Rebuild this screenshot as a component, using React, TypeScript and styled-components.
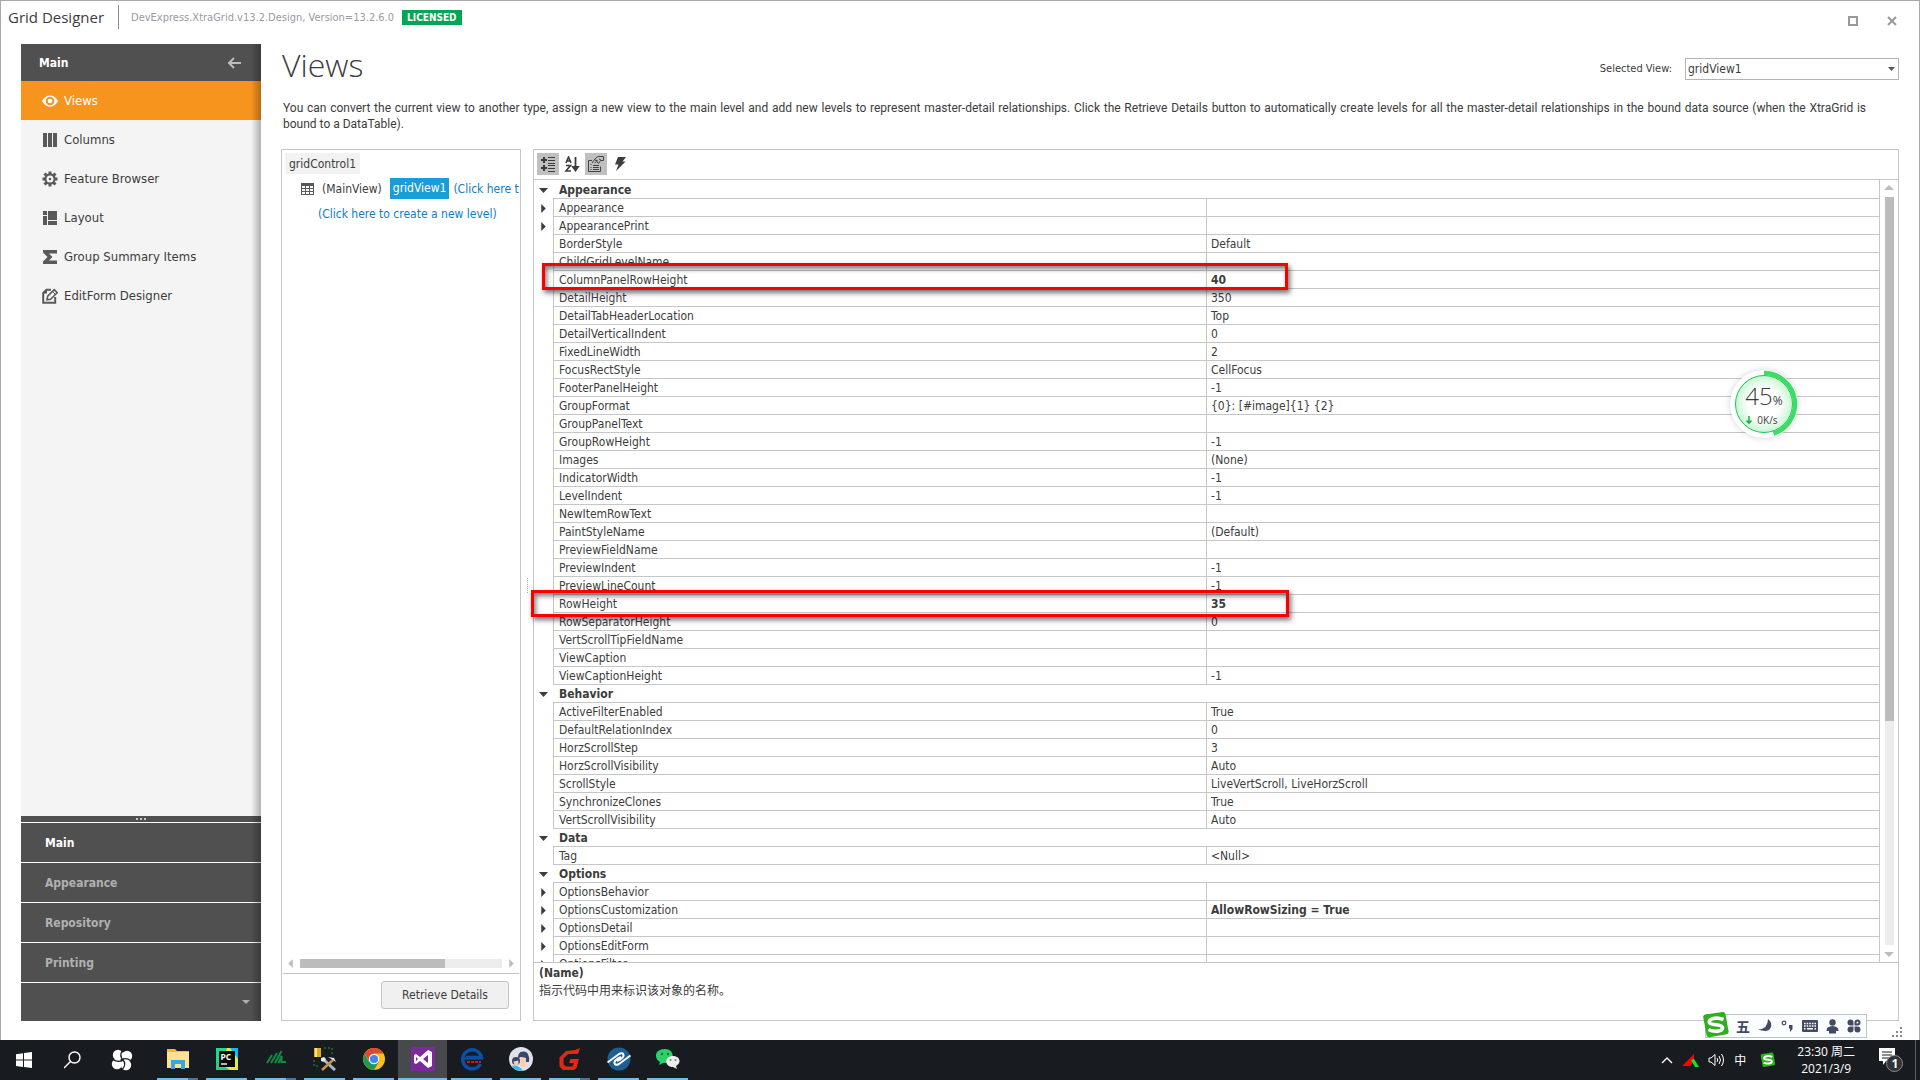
import React from 'react';
import styled, { createGlobalStyle, css } from 'styled-components';

const ui = `'DejaVu Sans Condensed', 'Noto Sans CJK SC', sans-serif`;
const display = `'Open Sans', 'Noto Sans CJK SC', sans-serif`;
const line = '#c6c6c6';
const ink = '#3c3c3c';
const dark = '#505050';

const Global = createGlobalStyle`
  * { box-sizing: border-box; }
  body { margin: 0; background: #fff; color: ${ink}; font: 12px/18px ${ui}; }
  button, select, input { font: inherit; color: inherit; }
  button { border: 0; padding: 0; background: none; text-align: left; }
  svg { display: block; flex: none; }
`;

/* ---------- shell ---------- */
const Screen = styled.div`
  position: relative;
  display: flex;
  flex-direction: column;
  height: 100vh;
  overflow: hidden;
`;
const Window = styled.main`
  flex: 1;
  min-height: 0;
  display: flex;
  flex-direction: column;
  border: 1px solid #a9a9a9;
  border-bottom: 0;
`;
const TitleBar = styled.header`
  display: flex;
  align-items: center;
  height: 43px;
  padding: 0 22px 12px 7px;
`;
const AppTitle = styled.h1`
  margin: 0;
  padding-right: 14px;
  font: 400 15px/24px ${display};
  border-right: 1px solid #8c8c8c;
`;
const Version = styled.span`
  padding-left: 12px;
  padding-top: 2px;
  font-size: 11px;
  color: #9a9aa2;
`;
const Badge = styled.span`
  margin-top: 2px;
  margin-left: 8px;
  padding: 0 5px;
  background: #00a651;
  color: #fff;
  font: 700 10px/15px ${ui};
`;
const WindowButtons = styled.div`
  display: flex;
  gap: 29px;
  margin-left: auto;
  padding-top: 8px;
  color: #999;
  button { display: block; }
`;
const Body = styled.div`
  flex: 1;
  min-height: 0;
  display: flex;
  gap: 20px;
  padding: 0 20px 19px 20px;
`;

/* ---------- sidebar ---------- */
const Sidebar = styled.nav`
  position: relative;
  flex: none;
  width: 240px;
  display: flex;
  flex-direction: column;
  background: #f4f4f4;
  &::after {
    content: '';
    position: absolute;
    inset: 0 0 0 auto;
    width: 10px;
    background: linear-gradient(to right, transparent, rgba(0, 0, 0, 0.28));
    pointer-events: none;
  }
`;
const SideHead = styled.div`
  display: flex;
  align-items: center;
  justify-content: space-between;
  height: 37px;
  padding: 0 20px 0 18px;
  background: ${dark};
  color: #fff;
  font-weight: 700;
`;
const SideItem = styled.button<{ $on?: boolean }>`
  display: flex;
  align-items: center;
  gap: 6px;
  height: 39px;
  padding-left: 21px;
  font-size: 13px;
  color: ${p => (p.$on ? '#fff' : ink)};
  background: ${p => (p.$on ? '#f7941e' : 'transparent')};
  svg { color: ${p => (p.$on ? '#fff' : '#5a5a5a')}; }
`;
const Spacer = styled.div`flex: 1;`;
const Grip = styled.div`
  display: flex;
  justify-content: center;
  align-items: center;
  gap: 2px;
  height: 6px;
  background: ${dark};
  i { width: 2px; height: 2px; background: #c8c8c8; }
`;
const Group = styled.button<{ $on?: boolean }>`
  height: 40px;
  padding-left: 24px;
  border-top: 1px solid #fff;
  background: ${dark};
  color: ${p => (p.$on ? '#fff' : '#b0b0b0')};
  font-weight: 700;
`;
const GroupMore = styled(Group)`
  height: 39px;
  display: flex;
  align-items: center;
  justify-content: flex-end;
  padding-right: 11px;
`;

/* ---------- content ---------- */
const Content = styled.section`
  flex: 1;
  min-width: 0;
  display: flex;
  flex-direction: column;
`;
const PageHead = styled.div`
  display: flex;
  justify-content: space-between;
  align-items: flex-start;
  height: 56px;
`;
const PageTitle = styled.h2`
  margin: 0;
  padding-left: 1px;
  font: 300 32px/42px ${display};
`;
const ViewPicker = styled.label`
  display: flex;
  align-items: center;
  gap: 13px;
  padding-top: 14px;
  font-size: 11px;
`;
const SelectBox = styled.span`
  position: relative;
  display: block;
  select {
    display: block;
    appearance: none;
    width: 214px;
    height: 22px;
    padding: 0 2px;
    border: 1px solid #b4b4b4;
    border-radius: 0;
    background: #fff;
    font-size: 12px;
  }
  svg { position: absolute; right: 4px; top: 9px; color: #555; }
`;
const Intro = styled.p`
  margin: 0;
  height: 49px;
  padding: 0 33px 0 2px;
  font-family: Roboto, sans-serif;
  line-height: 16px;
  text-align: justify;
`;
const Panels = styled.div`
  flex: 1;
  min-height: 0;
  display: flex;
`;
const Panel = styled.div`
  display: flex;
  flex-direction: column;
  min-width: 0;
  border: 1px solid ${line};
`;
const TreePanel = styled(Panel)`width: 240px; flex: none;`;
const GridPanel = styled(Panel)`flex: 1;`;
const Splitter = styled.div`
  flex: none;
  width: 12px;
  display: flex;
  align-items: center;
  justify-content: center;
  i { height: 15px; border-left: 1px dotted #aaa; }
`;
const Tree = styled.div`
  flex: 1;
  display: flex;
  flex-direction: column;
  align-items: stretch;
  gap: 4px;
  margin-right: 1px;
  padding: 3px 0 0 3px;
  overflow: hidden;
  white-space: nowrap;
`;
const TreeRoot = styled.span`
  align-self: flex-start;
  padding: 1px 4px 0;
  background: #f2f2f2;
  line-height: 20px;
`;
const TreeRow = styled.div<{ $indent: number }>`
  display: flex;
  align-items: center;
  height: 21px;
  padding-left: ${p => p.$indent}px;
`;
const TreeName = styled.span`padding: 0 8px;`;
const Selected = styled.span`
  padding: 0 3px;
  margin-right: 4px;
  background: #1a9cd8;
  color: #fff;
  line-height: 21px;
`;
const TreeLink = styled.a`
  flex: 1;
  min-width: 0;
  overflow: hidden;
  color: #0e7dc2;
  text-decoration: none;
`;
const HScroll = styled.div`
  display: flex;
  align-items: center;
  gap: 7px;
  height: 20px;
  padding: 0 6px;
  color: #bdbdbd;
`;
const HTrack = styled.div`
  flex: 1;
  height: 9px;
  background: #ededed;
  i { display: block; width: 72%; height: 100%; background: #bcbcbc; }
`;
const TreeFoot = styled.div`
  display: flex;
  justify-content: flex-end;
  margin: 0 1px;
  padding: 7px 10px 11px;
  border-top: 1px solid ${line};
`;
const PushButton = styled.button`
  width: 128px;
  height: 28px;
  border: 1px solid #c4c4c4;
  border-radius: 3px;
  background: #f0f0f0;
  text-align: center;
`;

/* ---------- property grid ---------- */
const Tools = styled.div`
  display: flex;
  align-items: center;
  gap: 2px;
  height: 30px;
  padding: 0 3px 2px;
  border-bottom: 1px solid ${line};
`;
const Tool = styled.button<{ $on?: boolean }>`
  display: grid;
  place-items: center;
  width: 22px;
  height: 22px;
  background: ${p => (p.$on ? '#c0c0c0' : 'transparent')};
`;
const GridArea = styled.div`
  flex: 1;
  min-height: 0;
  display: flex;
  border-bottom: 1px solid ${line};
`;
const TableClip = styled.div`
  flex: 1;
  min-width: 0;
  padding-top: 1px;
  overflow: hidden;
`;
const Table = styled.table`
  width: 100%;
  table-layout: fixed;
  border-collapse: separate;
  border-spacing: 0;
  td, th {
    height: 18px;
    padding: 1px 0 0;
    line-height: 16px;
    text-align: left;
    font-weight: 400;
    white-space: nowrap;
  }
  col:nth-child(1) { width: 19px; }
  col:nth-child(2) { width: 653px; }
`;
const Toggle = styled.td`
  svg { margin: 0 auto; }
`;
const rule = css`border-bottom: 1px solid ${line};`;
const Category = styled.th`
  && { font-weight: 700; padding-left: 6px; }
  ${rule}
`;
const Name = styled.th`
  && { padding-left: 5px; }
  border-left: 1px solid ${line};
  ${rule}
`;
const Value = styled.td<{ $bold?: boolean }>`
  && { padding-left: 4px; font-weight: ${p => (p.$bold ? 700 : 400)}; }
  border-left: 1px solid ${line};
  ${rule}
`;
const VScroll = styled.div`
  flex: none;
  width: 19px;
  display: flex;
  flex-direction: column;
  align-items: center;
  gap: 7px;
  padding: 5px 0;
  border-left: 1px solid ${line};
  color: #bdbdbd;
`;
const VTrack = styled.div`
  flex: 1;
  width: 9px;
  background: #ededed;
  i { display: block; width: 100%; height: 70%; background: #bcbcbc; }
`;
const Help = styled.div`
  height: 57px;
  padding: 1px 5px;
  strong { display: block; font-size: 12px; }
`;

/* ---------- overlays ---------- */
const Mark = styled.div<{ $x: number; $y: number; $w: number }>`
  position: absolute;
  left: ${p => p.$x}px;
  top: ${p => p.$y}px;
  width: ${p => p.$w}px;
  height: 27px;
  border: 3px solid #f80000;
  box-shadow: 2px 3px 5px rgba(0, 0, 0, 0.55), inset 2px 3px 5px rgba(0, 0, 0, 0.5);
  pointer-events: none;
`;
const Meter = styled.div`
  position: absolute;
  right: 122px;
  top: 370px;
  width: 68px;
  height: 68px;
  border-radius: 50%;
  display: flex;
  flex-direction: column;
  align-items: center;
  padding-top: 14px;
  background: #fff;
  box-shadow: 0 0 6px rgba(0, 0, 0, 0.18);
  > svg { position: absolute; inset: 0; }
`;
const Percent = styled.div`
  position: relative;
  font: 300 24px/24px ${display};
  small { font-size: 12px; font-weight: 400; }
`;
const Speed = styled.div`
  position: relative;
  display: flex;
  align-items: center;
  gap: 5px;
  padding-right: 4px;
  font: 10px/14px ${display};
`;
const Ime = styled.div`
  position: absolute;
  right: 53px;
  bottom: 42px;
  display: flex;
  align-items: center;
  gap: 8px;
  height: 24px;
  padding-right: 5px;
  border: 1px solid #b4c6d4;
  background: #fbfdff;
  color: #434b63;
  font: 700 14px/20px 'Noto Sans CJK SC', sans-serif;
  > svg:first-child { margin: -4px -2px -2px -4px; }
`;
const ResizeGrip = styled.div`
  position: absolute;
  right: 17px;
  bottom: 42px;
`;

/* ---------- taskbar ---------- */
const Taskbar = styled.footer`
  flex: none;
  display: flex;
  height: 40px;
  background: #181c21;
  color: #fff;
`;
const Starters = styled.div`
  display: flex;
  gap: 1px;
  width: 153px;
  button { width: 48px; display: grid; place-items: center; }
`;
const Task = styled.button<{ $active?: boolean; $many?: boolean }>`
  display: grid;
  grid-template-rows: 38px 2px;
  place-items: center;
  width: 49px;
  background: ${p => (p.$active ? '#47494d' : 'transparent')};
  &::after {
    content: '';
    width: ${p => (p.$active ? 49 : 41)}px;
    height: 2px;
    background: ${p => (p.$many ? 'linear-gradient(to right, #76b9ed 31px, #4a7598 31px)' : '#76b9ed')};
  }
`;
const Tray = styled.div`
  display: flex;
  align-items: center;
  margin-left: auto;
  font: 12px/17px ${display};
`;
const TrayIcons = styled.div`
  display: flex;
  align-items: center;
  gap: 9px;
  padding-right: 21px;
  > svg:last-child { margin-left: 5px; }
`;
const Clock = styled.div`
  text-align: center;
  padding-right: 23px;
`;
const Notice = styled.div`
  padding-right: 11px;
  height: 40px;
  display: flex;
  align-items: center;
`;
const ShowDesktop = styled.div`
  width: 5px;
  height: 40px;
  border-left: 1px solid #5c5f63;
`;

/* ---------- icons ---------- */
const Down = ({ w = 8, h = 4 }) => <svg width={w} height={h} viewBox="0 0 8 4" preserveAspectRatio="none"><path d="M0 0h8L4 4z" fill="currentColor" /></svg>;
const Up = () => <svg width="10" height="5" viewBox="0 0 8 4"><path d="M0 4h8L4 0z" fill="currentColor" /></svg>;
const Right = () => <svg width="5" height="9" viewBox="0 0 4 8"><path d="M0 0v8l4-4z" fill="currentColor" /></svg>;
const Left = () => <svg width="5" height="9" viewBox="0 0 4 8"><path d="M4 0v8L0 4z" fill="currentColor" /></svg>;

const sideIcons: Record<string, React.ReactNode> = {
  Views: <><path d="M0 8C3.500 .5 12.500 .5 16 8C12.500 15.500 3.500 15.500 0 8z" fill="currentColor" /><circle cx="8" cy="8" r="3.300" fill="none" stroke="#f7941e" strokeWidth="2" /></>,
  Columns: <path d="M1 1h4v14H1zM6 1h4v14H6zM11 1h4v14h-4z" fill="currentColor" />,
  'Feature Browser': <><circle cx="8" cy="8" r="4.600" fill="none" stroke="currentColor" strokeWidth="2.200" /><path d="M8 .5v3M8 12.500v3M.5 8h3M12.500 8h3M2.500 2.500l2.300 2.300M11.200 11.200l2.300 2.300M2.500 13.500l2.300-2.300M11.200 4.800l2.300-2.300" stroke="currentColor" strokeWidth="3" /><circle cx="8" cy="8" r="1.300" fill="currentColor" /></>,
  Layout: <path d="M1 1h4v4H1zM1 6h4v9H1zM6 1h9v9H6zM6 11h9v4H6z" fill="currentColor" />,
  'Group Summary Items': <path d="M1 1h14v3.500H7L10.500 8 7 11.500h8V15H1v-2.500L5.500 8 1 3.500z" fill="currentColor" />,
  'EditForm Designer': <><path d="M9 1.800H4.500L1.200 5v9.800h12V9" fill="none" stroke="currentColor" strokeWidth="2" /><path d="M1 5.500L5 1v4.500z" fill="currentColor" /><path d="M5 11.800l.7-3.600L12.200 1.700l3 3-6.600 6.500z" fill="#f4f4f4" stroke="currentColor" strokeWidth="1.600" /><path d="M10.500 3.500l3 3" stroke="currentColor" /></>,
};
const SideIcon = ({ name }: { name: string }) => <svg width="16" height="16" viewBox="0 0 16 16">{sideIcons[name]}</svg>;

const Sogou = ({ size }: { size: number }) => (
  <svg width={size} height={size} viewBox="0 0 28 28">
    <path d="M3.500 3.500Q1 4 1.200 6L4.500 24Q5 26.600 7.500 26.300L24.500 23.200Q27 22.700 26.600 20.500L23.500 3.300Q23 .8 20.700 1z" fill="#2db01c" />
    <path d="M21.500 8.500C14 5.500 6 8 7.500 11.800C9 14.800 20 12.500 20.500 16.500C21 20.500 12 21.500 6.500 18.500" fill="none" stroke="#fff" strokeWidth="3.600" />
  </svg>
);

const Icon = ({ children, s = 24 }: { children: React.ReactNode; s?: number }) => <svg width={s} height={s} viewBox="0 0 24 24">{children}</svg>;

const tasks: { name: string; many?: boolean; active?: boolean; art: React.ReactNode }[] = [
  { name: 'File Explorer', many: true, art: <><path d="M1 2h8l2 2h12v17H1z" fill="#f0b93a" /><path d="M1 5h22v16H1z" fill="#ffe08f" /><path d="M5 22v-9h14v9h-4v-5H9v5z" fill="#3aa5e0" /></> },
  { name: 'PyCharm', art: <><path d="M1 1h14v22H1z" fill="#21d789" /><path d="M12 1h11v10z" fill="#07c3f2" /><path d="M12 1h7l4 10v12H5z" fill="#e5e942" /><path d="M15 1h8v11z" fill="#0fbde8" /><path d="M1 14v9h14z" fill="#2fc887" /><path d="M4 4h16v16H4z" fill="#0a0a0a" /><path d="M6 17h6" stroke="#fff" strokeWidth="1.400" /><text x="5.500" y="12.500" fill="#fff" fontSize="8.500" fontWeight="700" fontFamily="Open Sans">PC</text></> },
  { name: 'Network Monitor', many: true, art: <path d="M3 16L8 8M7 16L13 6M11 16L17.500 4M14.500 16L17.500 9V15H22" fill="none" stroke="#108c40" strokeWidth="2" /> },
  { name: 'Database Tools', art: <><path d="M1 1h7v9H1z" fill="#e9a91c" /><path d="M2 1h2v9H2z" fill="#ffe693" /><path d="M11 1h8v8M1 13v6h6" fill="none" stroke="#28952d" strokeDasharray="2 2" /><path d="M10 12l12 11" stroke="#a8b8cb" strokeWidth="3" /><path d="M20 13L9 23" stroke="#c79346" strokeWidth="2.500" /><path d="M8 11l3-1 2 2-2 3-3-1zM15 10l6 1 2 4-3-2z" fill="#e4eaf0" /></> },
  { name: 'Chrome', art: <><circle cx="12" cy="12" r="11" fill="#fbc116" /><path d="M2.500 6.500A11 11 0 0 1 21.500 6.500H12L7.500 14.500z" fill="#df4634" /><path d="M2.500 6.500A11 11 0 0 0 12 23l5-8.500-10 0z" fill="#1c9a55" /><circle cx="12" cy="12" r="5.200" fill="#fff" /><circle cx="12" cy="12" r="4.100" fill="#4285f4" /></> },
  { name: 'Visual Studio', active: true, art: <><path d="M0 0h24v24H0z" fill="#7b2a9b" /><path d="M17 3l4 2v14l-4 2-8-7-4 3-2-1V8l2-1 4 3zM17 8l-5 4 5 4zM5 10v4l2-2z" fill="#fff" fillRule="evenodd" /></> },
  { name: 'Browser', art: <><path d="M20.500 17A9.500 9.500 0 1 1 21.500 10.500H6" fill="none" stroke="#0b4fa8" strokeWidth="3.400" /><path d="M1 11.500h22" stroke="#0b4fa8" strokeWidth="2" /><path d="M7 15h14" stroke="#c01c26" strokeWidth="2" strokeDasharray="3 1" /></> },
  { name: 'Contacts', art: <><circle cx="12" cy="12" r="12" fill="#dfe3e7" /><path d="M9 13Q8 4 15 4.500Q21 5 20 15h-3v-4l-6-1z" fill="#37466b" /><path d="M11 10l6 1v4l-1 5h-4z" fill="#f9cfae" /><circle cx="7" cy="14" r="4" fill="#37466b" /><path d="M4.500 14.500l5-1v4l-4 1z" fill="#f9cfae" /><path d="M3 19q5-2 11 4.500-7 1.500-11-4.500z" fill="#35b8e6" /></> },
  { name: 'G Studio', many: true, art: <path d="M22 1l-2 6H10l-4.500 4.500v6L8 19.500h6.500l1.500-3.500h-5l1.500-4H21l-2.500 9-2.500 2H5l-3.500-3.500v-9L8 4l9-1z" fill="#e02a18" /> },
  { name: 'Sync', art: <><circle cx="12" cy="12" r="11.500" fill="#1c5e96" /><path d="M.5 15.500L12 7q4-2 4.500 1T10 14M23.500 8.500L12 17q-4 2-4.500-1T14 10" fill="none" stroke="#fff" strokeWidth="2" /></> },
  { name: 'WeChat', art: <><path d="M9 2c-11 0-11 10-5 13l-1 3 4-2c12 1 13-14 2-14z" fill="#2bd168" /><path d="M17 9c-9 0-9 11 0 11l4 2-1-3c6-3 4-10-3-10z" fill="#ececec" /><circle cx="6" cy="7" r="1.200" fill="#17713a" /><circle cx="12" cy="7" r="1.200" fill="#17713a" /><circle cx="14.500" cy="13" r="1" fill="#777" /><circle cx="19.500" cy="13" r="1" fill="#777" /></> },
];

/* ---------- data ---------- */
type Row = [name: string, value?: string, flag?: 'bold' | 'open' | 'category' | 'openbold'];
const rows: Row[] = [
  ['Appearance', '', 'category'],
  ['Appearance', '', 'open'],
  ['AppearancePrint', '', 'open'],
  ['BorderStyle', 'Default'],
  ['ChildGridLevelName'],
  ['ColumnPanelRowHeight', '40', 'bold'],
  ['DetailHeight', '350'],
  ['DetailTabHeaderLocation', 'Top'],
  ['DetailVerticalIndent', '0'],
  ['FixedLineWidth', '2'],
  ['FocusRectStyle', 'CellFocus'],
  ['FooterPanelHeight', '-1'],
  ['GroupFormat', '{0}: [#image]{1} {2}'],
  ['GroupPanelText'],
  ['GroupRowHeight', '-1'],
  ['Images', '(None)'],
  ['IndicatorWidth', '-1'],
  ['LevelIndent', '-1'],
  ['NewItemRowText'],
  ['PaintStyleName', '(Default)'],
  ['PreviewFieldName'],
  ['PreviewIndent', '-1'],
  ['PreviewLineCount', '-1'],
  ['RowHeight', '35', 'bold'],
  ['RowSeparatorHeight', '0'],
  ['VertScrollTipFieldName'],
  ['ViewCaption'],
  ['ViewCaptionHeight', '-1'],
  ['Behavior', '', 'category'],
  ['ActiveFilterEnabled', 'True'],
  ['DefaultRelationIndex', '0'],
  ['HorzScrollStep', '3'],
  ['HorzScrollVisibility', 'Auto'],
  ['ScrollStyle', 'LiveVertScroll, LiveHorzScroll'],
  ['SynchronizeClones', 'True'],
  ['VertScrollVisibility', 'Auto'],
  ['Data', '', 'category'],
  ['Tag', '<Null>'],
  ['Options', '', 'category'],
  ['OptionsBehavior', '', 'open'],
  ['OptionsCustomization', 'AllowRowSizing = True', 'openbold'],
  ['OptionsDetail', '', 'open'],
  ['OptionsEditForm', '', 'open'],
  ['OptionsFilter', '', 'open'],
];

const PropertyTable = () => (
  <Table>
    <colgroup><col /><col /><col /></colgroup>
    <tbody>
      {rows.map(([name, value, flag], i) =>
        flag === 'category' ? (
          <tr key={i}>
            <Toggle><Down w={9} h={5} /></Toggle>
            <Category colSpan={2} scope="rowgroup">{name}</Category>
          </tr>
        ) : (
          <tr key={i}>
            <Toggle>{flag?.startsWith('open') && <Right />}</Toggle>
            <Name scope="row">{name}</Name>
            <Value $bold={flag?.endsWith('bold')}>{value}</Value>
          </tr>
        ),
      )}
    </tbody>
  </Table>
);

export default function App() {
  return (
    <Screen>
      <Global />
      <Window>
        <TitleBar>
          <AppTitle>Grid Designer</AppTitle>
          <Version>DevExpress.XtraGrid.v13.2.Design, Version=13.2.6.0</Version>
          <Badge>LICENSED</Badge>
          <WindowButtons>
            <button aria-label="Maximize"><svg width="10" height="10" viewBox="0 0 10 10"><path d="M1 1h8v8H1z" fill="none" stroke="currentColor" strokeWidth="2" /></svg></button>
            <button aria-label="Close"><svg width="10" height="10" viewBox="0 0 10 10"><path d="M1 1l8 8M9 1L1 9" stroke="currentColor" strokeWidth="2" /></svg></button>
          </WindowButtons>
        </TitleBar>
        <Body>
          <Sidebar>
            <SideHead>
              Main
              <svg width="14" height="12" viewBox="0 0 14 12"><path d="M7 1L2 6l5 5M2 6h12" fill="none" stroke="#bdbdbd" strokeWidth="2" /></svg>
            </SideHead>
            {Object.keys(sideIcons).map(n => (
              <SideItem key={n} $on={n === 'Views'}><SideIcon name={n} />{n}</SideItem>
            ))}
            <Spacer />
            <Grip><i /><i /><i /></Grip>
            <Group $on>Main</Group>
            <Group>Appearance</Group>
            <Group>Repository</Group>
            <Group>Printing</Group>
            <GroupMore aria-label="More groups"><Down /></GroupMore>
          </Sidebar>
          <Content>
            <PageHead>
              <PageTitle>Views</PageTitle>
              <ViewPicker>
                Selected View:
                <SelectBox>
                  <select defaultValue="gridView1"><option>gridView1</option></select>
                  <Down w={7} />
                </SelectBox>
              </ViewPicker>
            </PageHead>
            <Intro>
              You can convert the current view to another type, assign a new view to the main level and add new levels to represent master-detail relationships. Click the Retrieve Details button to automatically create levels for all the master-detail relationships in the bound data source (when the XtraGrid is bound to a DataTable).
            </Intro>
            <Panels>
              <TreePanel>
                <Tree>
                  <TreeRoot>gridControl1</TreeRoot>
                  <TreeRow $indent={16}>
                    <svg width="13" height="12" viewBox="0 0 13 12"><path d="M0 0h13v12H0z" fill="#5a5a5a" /><path d="M1 3h3v2H1zM5 3h3v2H5zM9 3h3v2H9zM1 6h3v2H1zM5 6h3v2H5zM9 6h3v2H9zM1 9h3v2H1zM5 9h3v2H5zM9 9h3v2H9z" fill="#fff" /></svg>
                    <TreeName>(MainView)</TreeName>
                    <Selected>gridView1</Selected>
                    <TreeLink href="#view">(Click here to change view)</TreeLink>
                  </TreeRow>
                  <TreeRow $indent={33}>
                    <TreeLink href="#level">(Click here to create a new level)</TreeLink>
                  </TreeRow>
                </Tree>
                <HScroll><Left /><HTrack><i /></HTrack><Right /></HScroll>
                <TreeFoot><PushButton>Retrieve Details</PushButton></TreeFoot>
              </TreePanel>
              <Splitter><i /></Splitter>
              <GridPanel>
                <Tools>
                  <Tool $on aria-label="Categorized"><svg width="16" height="16" viewBox="0 0 16 16"><path d="M1 4h6M4 1v6M1 12h6M4 9v6" stroke={ink} strokeWidth="2" /><path d="M8 1.500h7M8 4.500h7M8 7.500h7M8 9.500h7M8 12.500h7M8 15.500h7" stroke={ink} /></svg></Tool>
                  <Tool aria-label="Alphabetical"><svg width="16" height="16" viewBox="0 0 16 16"><path d="M2 7L4.500 1 7 7M3 5h3M2 9.500h4.500L2 15h5" fill="none" stroke={ink} strokeWidth="1.600" /><path d="M11.500 1v12M9 11l2.500 3.500L14 11z" stroke={ink} strokeWidth="1.800" fill={ink} /></svg></Tool>
                  <Tool $on aria-label="Property pages"><svg width="18" height="18" viewBox="0 0 18 18" fill="none" stroke="#444"><path d="M5 5.500H1.500v11h12v-5M3.500 9.500h1M6 10.500h6M3.500 12.500h1M6 12.500h6M3.500 14.500h1M6 14.500h6" /><path d="M5 8l3-4 3-2.500h5.500v4h-3l-2 3-2-2-2 1.500M8 5l3 1M12 4l2 1" /></svg></Tool>
                  <Tool aria-label="Events"><svg width="14" height="16" viewBox="0 0 14 16"><path d="M5 1h8L9.500 5.500h3L3 15l2.500-6.500H2z" fill={ink} /></svg></Tool>
                </Tools>
                <GridArea>
                  <TableClip><PropertyTable /></TableClip>
                  <VScroll><Up /><VTrack><i /></VTrack><Down w={10} h={5} /></VScroll>
                </GridArea>
                <Help>
                  <strong>(Name)</strong>
                  指示代码中用来标识该对象的名称。
                </Help>
              </GridPanel>
            </Panels>
          </Content>
        </Body>
      </Window>

      <Taskbar>
        <Starters>
          <button aria-label="Start"><svg width="16" height="16" viewBox="0 0 16 16"><path d="M0 2.200L7 1.200V7.600H0zM8 1.100L16 0v7.600H8zM0 8.500h7v6.400L0 13.900zM8 8.500h8V16L8 14.900z" fill="#fff" /></svg></button>
          <button aria-label="Search"><svg width="18" height="18" viewBox="0 0 18 18"><circle cx="10.500" cy="6.500" r="5.500" fill="none" stroke="#fff" strokeWidth="1.400" /><path d="M6.500 10.500L0 17" stroke="#fff" strokeWidth="1.500" /></svg></button>
          <button aria-label="Task view"><svg width="22" height="22" viewBox="0 0 22 22"><circle cx="7" cy="6" r="5.200" fill="#fff" /><circle cx="16" cy="7" r="5.200" fill="#fff" /><circle cx="15" cy="16" r="5.200" fill="#fff" /><circle cx="6" cy="15" r="5.200" fill="#fff" /><path d="M11.500 1Q8 7 12 11T11 21M1.500 10.500Q8 14 11 11T20.500 12" fill="none" stroke="#181c21" strokeWidth="1.300" /></svg></button>
        </Starters>
        {tasks.map(t => (
          <Task key={t.name} aria-label={t.name} $active={t.active} $many={t.many}><Icon>{t.art}</Icon></Task>
        ))}
        <Tray>
          <TrayIcons>
            <svg width="12" height="8" viewBox="0 0 12 8"><path d="M1 7l5-5 5 5" fill="none" stroke="#fff" strokeWidth="1.400" /></svg>
            <svg width="17" height="13" viewBox="0 0 17 13"><path d="M12 0v7l-4 5H0z" fill="#f00" /><path d="M9 6l3-1 5 8h-4z" fill="#0e2" /></svg>
            <svg width="17" height="14" viewBox="0 0 17 14" fill="none" stroke="#fff"><path d="M1 5h2l4-3.500v11L3 9H1zM9 5q1.500 2 0 4M11 3q3 4 0 8M13.500 1q4 6 0 12" /></svg>
            <span>中</span>
            <Sogou size={16} />
          </TrayIcons>
          <Clock><div>23:30 周二</div><div>2021/3/9</div></Clock>
          <Notice>
            <svg width="26" height="26" viewBox="0 0 26 26"><path d="M1 1h16v13h-9l-3 4v-4H1z" fill="#fff" /><path d="M4 5h10M4 8h10M4 11h7" stroke="#181c21" /><circle cx="16.500" cy="16.500" r="8" fill="#303236" stroke="#8b8b8b" /><text x="13.500" y="21" fill="#fff" fontSize="12" fontWeight="700" fontFamily="Open Sans">1</text></svg>
          </Notice>
          <ShowDesktop />
        </Tray>
      </Taskbar>

      <Mark $x={542} $y={263} $w={746} />
      <Mark $x={531} $y={590} $w={758} />
      <Meter>
        <svg width="68" height="68" viewBox="0 0 68 68">
          <defs><radialGradient id="glow"><stop offset="0.55" stopColor="#fff" /><stop offset="1" stopColor="#c8f5d2" /></radialGradient></defs>
          <circle cx="34" cy="34" r="28.500" fill="url(#glow)" stroke="#1cc454" />
          <path d="M34 3A31 31 0 0 1 43.500 63.500" fill="none" stroke="#3ddc66" strokeWidth="4.500" />
        </svg>
        <Percent>45<small>%</small></Percent>
        <Speed><svg width="6" height="8" viewBox="0 0 6 8"><path d="M3 0v7M.5 4.500L3 7.200l2.500-2.700" fill="none" stroke="#16a83e" strokeWidth="1.400" /></svg>0K/s</Speed>
      </Meter>
      <Ime>
        <Sogou size={28} />
        <span>五</span>
        <svg width="15" height="14" viewBox="0 0 15 14"><path d="M10 0q5 4 2.500 9T0 10.500Q10 10 10 0z" fill="currentColor" /></svg>
        <svg width="13" height="14" viewBox="0 0 13 14"><circle cx="3" cy="4" r="1.800" fill="none" stroke="currentColor" strokeWidth="1.200" /><path d="M8 6h3.500v4L9 13V9.500H8z" fill="currentColor" /></svg>
        <svg width="16" height="12" viewBox="0 0 16 12"><rect width="16" height="12" rx="1" fill="currentColor" /><path d="M2 3.500h12M2 6h12" stroke="#fff" strokeWidth="1.500" strokeDasharray="1.600 1" /><path d="M2 8.800h1.500M5 8.800h6M12.500 8.800H14" stroke="#fff" strokeWidth="1.500" /></svg>
        <svg width="13" height="15" viewBox="0 0 13 15"><circle cx="6.500" cy="3.500" r="3.200" fill="currentColor" /><path d="M1 9q5.500-4 11 0l.5 3H10v2.500H3V12H.5z" fill="currentColor" /></svg>
        <svg width="14" height="14" viewBox="0 0 14 14"><path d="M3.500 0.500a3 3 0 1 0 0 6H6.500v-3a3 3 0 0 0-3-3zM3.500 13.500a3 3 0 1 1 0-6H6.500v3a3 3 0 0 1-3 3zM10.500 13.500a3 3 0 1 0 0-6H7.500v3a3 3 0 0 0 3 3z" fill="currentColor" /><path d="M8.500 5.500v-2a2 2 0 1 1 2 2z" fill="none" stroke="currentColor" strokeWidth="2" /></svg>
      </Ime>
      <ResizeGrip><svg width="11" height="11" viewBox="0 0 11 11" fill="#888"><path d="M8 0h2v2H8zM4 4h2v2H4zM8 4h2v2H8zM0 8h2v2H0zM4 8h2v2H4zM8 8h2v2H8z" /></svg></ResizeGrip>
    </Screen>
  );
}
